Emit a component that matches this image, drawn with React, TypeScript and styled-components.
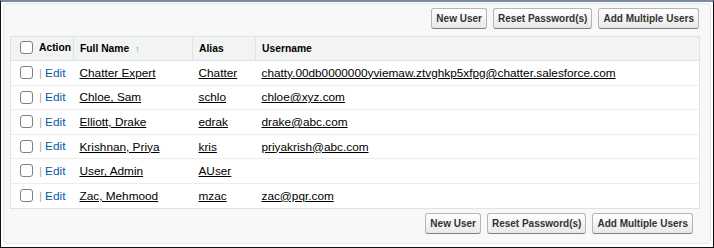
import React from 'react';
import styled, { createGlobalStyle } from 'styled-components';

const GlobalStyle = createGlobalStyle`
  html, body {
    margin: 0;
    padding: 0;
    background: #ffffff;
    font-family: Arial, "Liberation Sans", Helvetica, sans-serif;
  }
`;

const Frame = styled.div`
  width: 714px;
  height: 248px;
  box-sizing: border-box;
  border: 1px solid #111;
  border-top: 2px solid #7d8ba0;
  padding: 1px 2px 3px 2px;
  background: #fff;
`;

const Panel = styled.div`
  height: 100%;
  box-sizing: border-box;
  background: #f8f8f8;
  border: 1px solid #e6e6e6;
  border-radius: 4px;
  padding: 0 9px 0 6px;
  display: flex;
  flex-direction: column;
`;

const ButtonBar = styled.div<{ $offset: number; $top: number }>`
  display: flex;
  justify-content: flex-end;
  align-items: flex-start;
  gap: 6px;
  padding-right: ${p => p.$offset}px;
  padding-top: ${p => p.$top}px;
  height: 32px;
  box-sizing: border-box;
`;

const Button = styled.button`
  font-family: Arial, "Liberation Sans", Helvetica, sans-serif;
  font-weight: bold;
  font-size: 10px;
  color: #333;
  height: 21px;
  padding: 0 4px;
  border: 1px solid #b5b5b5;
  border-bottom-color: #808080;
  border-radius: 3px;
  background: linear-gradient(#ffffff, #f2f2f2 60%, #e8e8e8);
  cursor: pointer;
`;

const Table = styled.table`
  width: 690px;
  table-layout: fixed;
  border-collapse: collapse;
  background: #fff;
  border: 1px solid #e0e3e5;
  font-size: 11.8px;
`;

const HeadCell = styled.th`
  box-sizing: border-box;
  height: 24px;
  text-align: left;
  font-weight: bold;
  font-size: 10.3px;
  color: #000;
  background: #f2f3f3;
  border-bottom: 1px solid #e0e3e5;
  border-left: 1px solid #e0e3e5;
  padding: 0 6px;
  white-space: nowrap;
  &:first-child {
    border-left: none;
    padding-left: 9px;
  }
`;

const Cell = styled.td`
  box-sizing: border-box;
  height: 24.6px;
  padding: 0 6px;
  border-bottom: 1px solid #ededed;
  color: #000;
  white-space: nowrap;
  overflow: visible;
  &:first-child {
    padding-left: 9px;
  }
`;

const Row = styled.tr`
  &:last-child td {
    border-bottom: none;
  }
`;

const Check = styled.span`
  display: inline-block;
  box-sizing: border-box;
  width: 13px;
  height: 13px;
  border: 1px solid #808080;
  border-radius: 3px;
  background: #fff;
  vertical-align: middle;
  margin-right: 6px;
  position: relative;
  top: -1px;
`;

const Pipe = styled.span`
  color: #aaa;
  margin-right: 3px;
`;

const EditLink = styled.a`
  color: #015ba7;
  text-decoration: none;
`;

const TextLink = styled.a`
  color: #000;
  text-decoration: underline;
`;

const SortArrow = styled.span`
  color: #888;
  font-size: 9px;
  margin-left: 6px;
`;

const users = [
  { name: 'Chatter Expert', alias: 'Chatter', username: 'chatty.00db0000000yviemaw.ztvghkp5xfpg@chatter.salesforce.com' },
  { name: 'Chloe, Sam', alias: 'schlo', username: 'chloe@xyz.com' },
  { name: 'Elliott, Drake', alias: 'edrak', username: 'drake@abc.com' },
  { name: 'Krishnan, Priya', alias: 'kris', username: 'priyakrish@abc.com' },
  { name: 'User, Admin', alias: 'AUser', username: '' },
  { name: 'Zac, Mehmood', alias: 'mzac', username: 'zac@pqr.com' },
];

const Buttons: React.FC<{ offset: number; top: number }> = ({ offset, top }) => (
  <ButtonBar $offset={offset} $top={top}>
    <Button>New User</Button>
    <Button>Reset Password(s)</Button>
    <Button>Add Multiple Users</Button>
  </ButtonBar>
);

const App: React.FC = () => (
  <>
    <GlobalStyle />
    <Frame>
      <Panel>
        <Buttons offset={2} top={4} />
        <Table>
          <colgroup>
            <col style={{ width: 63 }} />
            <col style={{ width: 119 }} />
            <col style={{ width: 63 }} />
            <col />
          </colgroup>
          <thead>
            <tr>
              <HeadCell>
                <Check />Action
              </HeadCell>
              <HeadCell>
                Full Name<SortArrow>↑</SortArrow>
              </HeadCell>
              <HeadCell>Alias</HeadCell>
              <HeadCell>Username</HeadCell>
            </tr>
          </thead>
          <tbody>
            {users.map(u => (
              <Row key={u.name}>
                <Cell>
                  <Check />
                  <Pipe>|</Pipe>
                  <EditLink href="#">Edit</EditLink>
                </Cell>
                <Cell><TextLink href="#">{u.name}</TextLink></Cell>
                <Cell><TextLink href="#">{u.alias}</TextLink></Cell>
                <Cell>{u.username && <TextLink href="#">{u.username}</TextLink>}</Cell>
              </Row>
            ))}
          </tbody>
        </Table>
        <Buttons offset={8} top={4} />
      </Panel>
    </Frame>
  </>
);

export default App;
